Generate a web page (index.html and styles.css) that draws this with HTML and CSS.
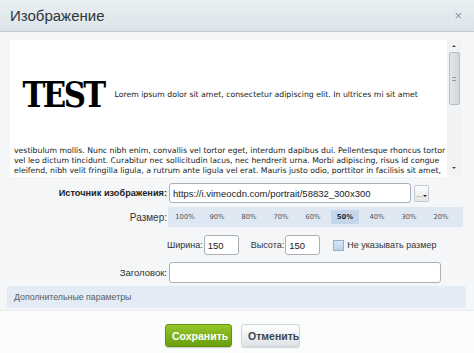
FILE: index.html
```html
<!DOCTYPE html>
<html lang="ru">
<head>
    <meta charset="UTF-8">
    <title>Изображение</title>
    <link rel="stylesheet" href="styles.css">
</head>
<body>
    <div class="dialog">
        <div class="dialog-head">
            <span class="dialog-title">Изображение</span>
            <span class="dialog-close">×</span>
        </div>

        <div class="dialog-body">
            <div class="editor">
                <div class="editor-text">
                    <p><span class="test-img"><span>TEST</span></span> Lorem ipsum dolor sit amet, consectetur adipiscing elit. In ultrices mi sit amet<br>
                    vestibulum mollis. Nunc nibh enim, convallis vel tortor eget, interdum dapibus dui. Pellentesque rhoncus tortor<br>
                    vel leo dictum tincidunt. Curabitur nec sollicitudin lacus, nec hendrerit urna. Morbi adipiscing, risus id congue<br>
                    eleifend, nibh velit fringilla ligula, a rutrum ante ligula vel erat. Mauris justo odio, porttitor in facilisis sit amet,</p>
                </div>
                <div class="scrollbar">
                    <span class="arrow up"></span>
                    <span class="thumb"><i></i></span>
                    <span class="arrow down"></span>
                </div>
            </div>

            <div class="form">
                <div class="row row-src">
                    <label class="lbl bold">Источник изображения:</label>
                    <div class="field">
                        <input class="inp inp-src" type="text" value="https://i.vimeocdn.com/portrait/58832_300x300">
                        <span class="btn-more">...<i></i></span>
                    </div>
                </div>

                <div class="row row-size">
                    <label class="lbl lbl-size">Размер:</label>
                    <div class="field sizes">
                        <span>100%</span>
                        <span>90%</span>
                        <span>80%</span>
                        <span>70%</span>
                        <span>60%</span>
                        <span class="active">50%</span>
                        <span>40%</span>
                        <span>30%</span>
                        <span>20%</span>
                    </div>
                </div>

                <div class="row row-dims">
                    <span class="lbl"></span>
                    <div class="field dims">
                        <label>Ширина:</label>
                        <input class="inp inp-num" type="text" value="150">
                        <label class="lbl-h">Высота:</label>
                        <input class="inp inp-num" type="text" value="150">
                        <span class="check"></span>
                        <label class="check-lbl">Не указывать размер</label>
                    </div>
                </div>

                <div class="row row-title">
                    <label class="lbl">Заголовок:</label>
                    <div class="field">
                        <input class="inp inp-title" type="text" value="">
                    </div>
                </div>
            </div>

            <div class="extras">Дополнительные параметры</div>
        </div>

        <div class="dialog-foot">
            <button class="btn btn-save">Сохранить</button>
            <button class="btn btn-cancel">Отменить</button>
        </div>
    </div>
</body>
</html>
```

FILE: styles.css
```css
body {
    margin: 0;
    font-family: "Liberation Sans", Arial, sans-serif;
    background-color: #fbfcfc;
}
.dialog {
    width: 474px;
    height: 353px;
    overflow: hidden;
    background-color: #fbfcfc;
}
.dialog-head {
    height: 31px;
    display: flex;
    justify-content: space-between;
    align-items: center;
    padding: 0 12px 0 10px;
    background: linear-gradient(#e9eff2, #dde5ea);
    border-bottom: 1px solid #c3cad0;
}
.dialog-title {
    font-size: 15px;
    color: #2e3437;
}
.dialog-close {
    font-size: 13px;
    color: #8a949b;
}
.dialog-body {
    background-color: #f4f6f8;
    padding: 8px 8px 2px 7px;
    border-bottom: 1px solid #e8ecef;
}
.editor {
    margin: 0 5px 0 3px;
    height: 137px;
    display: flex;
    background-color: #fff;
}
.editor-text {
    flex-grow: 1;
    overflow: hidden;
    padding: 4px 0 0 4px;
    font-family: "DejaVu Sans", Verdana, sans-serif;
    font-size: 7.75px;
    color: #222;
}
.editor-text p {
    margin: 0;
    line-height: 10px;
    white-space: nowrap;
}
.test-img {
    display: inline-flex;
    width: 98px;
    height: 102px;
    align-items: center;
    justify-content: center;
    vertical-align: middle;
}
.test-img span {
    font-family: "DejaVu Serif", serif;
    font-weight: bold;
    font-size: 35px;
    letter-spacing: -3px;
    color: #000;
    transform: scaleX(0.88);
}
.scrollbar {
    width: 14px;
    background-color: #f1f2f3;
    display: flex;
    flex-direction: column;
    align-items: center;
}
.arrow {
    width: 0;
    height: 0;
    border-left: 2px solid transparent;
    border-right: 2px solid transparent;
}
.arrow.up {
    margin-top: 5px;
    border-bottom: 2px solid #444;
}
.arrow.down {
    margin-top: auto;
    margin-bottom: 8px;
    border-top: 2px solid #444;
}
.thumb {
    margin-top: 5px;
    width: 9px;
    height: 51px;
    border: 1px solid #b9bec2;
    border-radius: 2px;
    background: linear-gradient(to right, #e4e6e8, #d3d6d9);
    display: flex;
    align-items: center;
    justify-content: center;
}
.thumb i {
    width: 4px;
    height: 4px;
    border-top: 1px solid #999;
    border-bottom: 1px solid #999;
    box-sizing: border-box;
}
.form {
    padding-top: 6px;
}
.row {
    display: grid;
    grid-template-columns: 160px 1fr;
    column-gap: 2px;
    align-items: center;
    font-size: 9.5px;
    color: #333;
}
.lbl {
    text-align: right;
}
.bold {
    font-weight: bold;
    font-size: 9.2px;
    color: #222;
}
.lbl-size {
    font-size: 10px;
}
.field {
    display: flex;
    align-items: center;
}
.inp {
    box-sizing: border-box;
    height: 20px;
    border: 1px solid #a9b1b8;
    border-radius: 3px;
    padding: 0 3px;
    font-family: "Liberation Sans", Arial, sans-serif;
    font-size: 9.5px;
    color: #222;
    background-color: #fff;
}
.inp-src {
    width: 242px;
}
.btn-more {
    margin-left: 3px;
    width: 15px;
    height: 17px;
    box-sizing: border-box;
    border: 1px solid #c4cacf;
    border-radius: 2px;
    background: linear-gradient(#fafbfb, #e3e7ea);
    font-size: 7px;
    color: #666;
    display: flex;
    align-items: flex-end;
    justify-content: center;
    padding-bottom: 3px;
}
.btn-more i {
    width: 0;
    height: 0;
    border-left: 2px solid transparent;
    border-right: 2px solid transparent;
    border-top: 2px solid #222;
    margin: 0 0 1px 1px;
}
.row-size {
    margin-top: 4px;
}
.sizes {
    height: 20px;
    background-color: #dfe8f2;
    margin-left: -1px;
    margin-right: 3px;
    padding-left: 3px;
    gap: 4px;
}
.sizes span {
    width: 28px;
    height: 14px;
    line-height: 14px;
    text-align: center;
    font-family: "DejaVu Sans", Verdana, sans-serif;
    font-size: 6.8px;
    color: #4c5660;
}
.sizes span.active {
    background-color: #c3d6ea;
    font-weight: bold;
    color: #1c2630;
}
.row-dims {
    margin-top: 8px;
}
.dims {
    margin-left: -2px;
    font-size: 9px;
}
.dims label {
    margin-right: 1px;
}
.dims .lbl-h {
    margin-left: 12px;
}
.inp-num {
    width: 35px;
}
.check {
    margin-left: 13px;
    width: 11px;
    height: 11px;
    box-sizing: border-box;
    border: 1px solid #8fb0d0;
    background: linear-gradient(#d8e7f5, #b9d2ea);
}
.check-lbl {
    margin-left: 3px;
}
.row-title {
    margin-top: 7px;
}
.inp-title {
    width: 272px;
    height: 21px;
}
.extras {
    margin-top: 3px;
    height: 22px;
    line-height: 22px;
    padding-left: 7px;
    background-color: #e3ebf4;
    border-radius: 2px;
    font-size: 8.8px;
    color: #555d64;
}
.dialog-foot {
    display: flex;
    justify-content: center;
    gap: 9px;
    padding: 13px 9px 0 0;
}
.btn {
    height: 23px;
    border-radius: 3px;
    font-family: "Liberation Sans", Arial, sans-serif;
    font-size: 10.5px;
    font-weight: bold;
    cursor: pointer;
}
.btn-save {
    width: 67px;
    color: #fff;
    border: 1px solid #64920c;
    background: linear-gradient(#96c62a, #6b9e0d);
    box-shadow: 0 1px 1px rgba(0,0,0,0.2);
}
.btn-cancel {
    width: 59px;
    color: #3b4650;
    border: 1px solid #cfd6da;
    background: linear-gradient(#ffffff, #dde3e7);
    box-shadow: 0 1px 1px rgba(0,0,0,0.15);
}
```
